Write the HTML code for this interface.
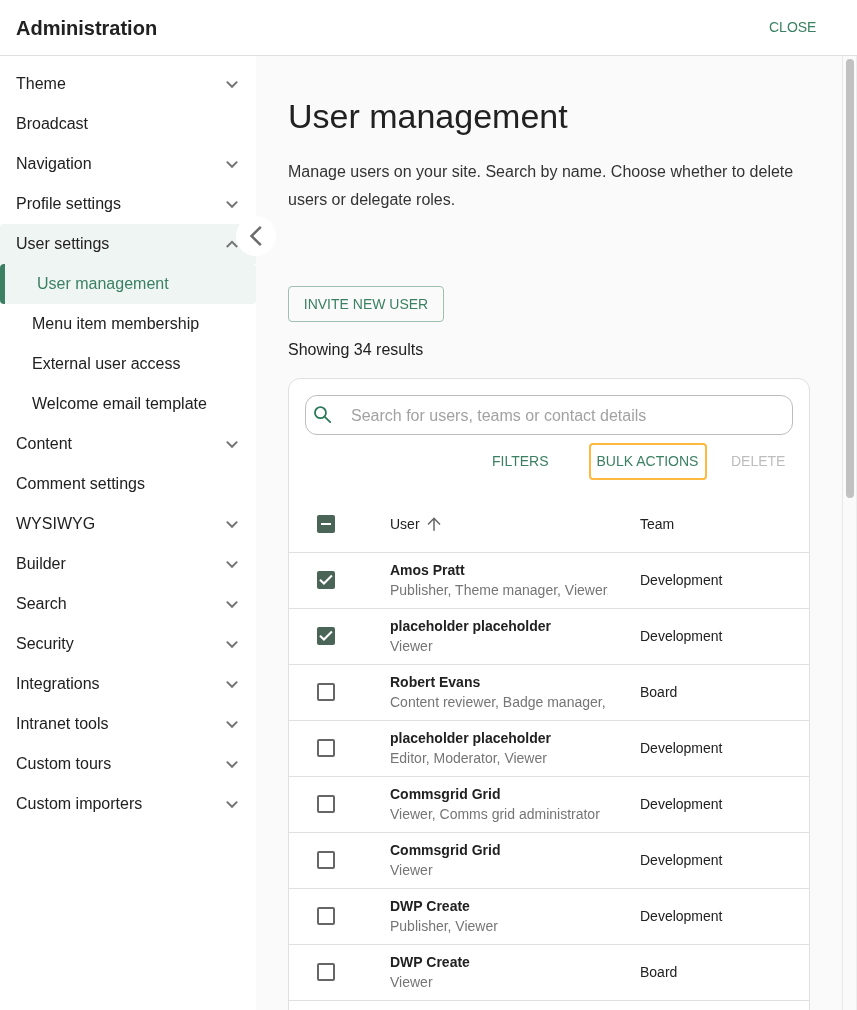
<!DOCTYPE html>
<html lang="en">
<head>
<meta charset="utf-8">
<title>Administration</title>
<style>
*{box-sizing:border-box;margin:0;padding:0}
html,body{width:857px;height:1010px;overflow:hidden;background:#fff}
body{-webkit-font-smoothing:antialiased;font-family:"Liberation Sans",Arial,Helvetica,sans-serif;color:#212121;position:relative}
.header,.sidebar,.main{will-change:transform}
.header{position:absolute;left:0;top:0;width:857px;height:56px;background:#fff;border-bottom:1px solid #e0e0e0;z-index:5}
.header h2{position:absolute;left:16px;top:16px;font-size:20px;line-height:24px;font-weight:700;color:#212121;letter-spacing:0}
.header .close{position:absolute;left:769px;top:18px;font-size:14px;line-height:18px;color:#3b8063;letter-spacing:0}
.sidebar{position:absolute;left:0;top:56px;width:256px;height:954px;background:#fff}
.nav{list-style:none;position:absolute;left:0;top:8px;width:256px}
.nav li{position:relative;height:40px;line-height:40px;font-size:16px;padding-left:16px;color:#212121;white-space:nowrap}
.nav li.sub{padding-left:32px}
.nav li.open{background:#eff5f3;border-radius:4px 0 0 0}
.nav li.active{background:#eff5f3;color:#3b8063;border-left:5px solid #3b8063;border-radius:4px;padding-left:32px}
.nav li svg{position:absolute;left:226px;top:15px;width:12px;height:10px}
.main{position:absolute;left:256px;top:56px;width:586px;height:954px;background:#fafafa;overflow:hidden}
.scroll{position:absolute;left:842px;top:56px;width:15px;height:954px;background:#fafafa;border-left:1px solid #e8e8e8;border-right:1px solid #ededed}
.scroll i{position:absolute;left:3px;top:3px;width:8px;height:439px;border-radius:4px;background:#c1c1c1}
.toggle{position:absolute;left:236px;top:216px;width:40px;height:40px;border-radius:50%;background:#fff;z-index:6}
.toggle svg{position:absolute;left:12px;top:10px;width:16px;height:20px}
h1{position:absolute;left:32px;top:40px;font-size:34px;line-height:40px;font-weight:400;color:#212121;white-space:nowrap}
.desc{position:absolute;left:32px;top:102px;width:520px;font-size:16px;line-height:28px;color:#333}
.invite{position:absolute;left:32px;top:230px;width:156px;height:36px;border:1px solid #9dc0b1;border-radius:4px;font-size:14px;line-height:34px;text-align:center;color:#3b8063;white-space:nowrap}
.showing{position:absolute;left:32px;top:284px;font-size:16px;line-height:20px;color:#212121}
.card{position:absolute;left:32px;top:322px;width:522px;height:700px;background:#fff;border:1px solid #e0e0e0;border-radius:12px;overflow:hidden}
.search{position:absolute;left:16px;top:16px;width:488px;height:40px;border:1px solid #bdbdbd;border-radius:12px;background:#fff}
.search svg{position:absolute;left:7px;top:8px;width:20px;height:20px}
.search span{position:absolute;left:45px;top:1px;line-height:38px;font-size:16px;color:#a2a2a2;white-space:nowrap}
.btn{position:absolute;font-size:14px;line-height:18px;white-space:nowrap}
.filters{left:203px;top:73px;color:#3b8063}
.bulk{left:300px;top:64px;width:118px;height:37px;border:2px solid #ffb93f;border-radius:4px;color:#3b8063;text-align:center;line-height:33px;padding-right:1px}
.delete{left:442px;top:73px;color:#bdbdbd}
.thead .cb{top:19px}
.thead{position:absolute;left:0;top:117px;width:520px;height:57px;border-bottom:1px solid #e0e0e0;font-size:14px;line-height:56px;color:#212121}
.row{position:absolute;left:0;width:520px;height:56px;border-bottom:1px solid #e0e0e0}
.cb{position:absolute;left:28px;top:18px;width:18px;height:18px;border-radius:2px}
.cb.on{background:#4a6558}
.cb.off{border:2px solid #666}
.cb svg{position:absolute;left:0;top:0;width:18px;height:18px}
.c1{position:absolute;left:101px}
.c2{position:absolute;left:351px}
.arr{position:absolute;left:137px;top:20px;width:16px;height:16px}
.name{position:absolute;left:101px;top:8px;font-size:14px;line-height:18px;font-weight:700;color:#212121;white-space:nowrap}
.roles{position:absolute;left:101px;top:28px;font-size:14px;line-height:18px;color:#757575;white-space:nowrap;width:218px;overflow:hidden}
.team{position:absolute;left:351px;top:18px;font-size:14px;line-height:18px;color:#212121;white-space:nowrap}
</style>
</head>
<body>
<div class="header"><h2>Administration</h2><span class="close">CLOSE</span></div>
<div class="sidebar">
<ul class="nav">
<li>Theme<svg viewBox="0 0 12 10"><path d="M0.8 2.6 6 7.8 11.2 2.6" fill="none" stroke="#757575" stroke-width="2"/></svg></li>
<li>Broadcast</li>
<li>Navigation<svg viewBox="0 0 12 10"><path d="M0.8 2.6 6 7.8 11.2 2.6" fill="none" stroke="#757575" stroke-width="2"/></svg></li>
<li>Profile settings<svg viewBox="0 0 12 10"><path d="M0.8 2.6 6 7.8 11.2 2.6" fill="none" stroke="#757575" stroke-width="2"/></svg></li>
<li class="open">User settings<svg viewBox="0 0 12 10"><path d="M0.8 8 6 2.8 11.2 8" fill="none" stroke="#757575" stroke-width="2"/></svg></li>
<li class="active">User management</li>
<li class="sub">Menu item membership</li>
<li class="sub">External user access</li>
<li class="sub">Welcome email template</li>
<li>Content<svg viewBox="0 0 12 10"><path d="M0.8 2.6 6 7.8 11.2 2.6" fill="none" stroke="#757575" stroke-width="2"/></svg></li>
<li>Comment settings</li>
<li>WYSIWYG<svg viewBox="0 0 12 10"><path d="M0.8 2.6 6 7.8 11.2 2.6" fill="none" stroke="#757575" stroke-width="2"/></svg></li>
<li>Builder<svg viewBox="0 0 12 10"><path d="M0.8 2.6 6 7.8 11.2 2.6" fill="none" stroke="#757575" stroke-width="2"/></svg></li>
<li>Search<svg viewBox="0 0 12 10"><path d="M0.8 2.6 6 7.8 11.2 2.6" fill="none" stroke="#757575" stroke-width="2"/></svg></li>
<li>Security<svg viewBox="0 0 12 10"><path d="M0.8 2.6 6 7.8 11.2 2.6" fill="none" stroke="#757575" stroke-width="2"/></svg></li>
<li>Integrations<svg viewBox="0 0 12 10"><path d="M0.8 2.6 6 7.8 11.2 2.6" fill="none" stroke="#757575" stroke-width="2"/></svg></li>
<li>Intranet tools<svg viewBox="0 0 12 10"><path d="M0.8 2.6 6 7.8 11.2 2.6" fill="none" stroke="#757575" stroke-width="2"/></svg></li>
<li>Custom tours<svg viewBox="0 0 12 10"><path d="M0.8 2.6 6 7.8 11.2 2.6" fill="none" stroke="#757575" stroke-width="2"/></svg></li>
<li>Custom importers<svg viewBox="0 0 12 10"><path d="M0.8 2.6 6 7.8 11.2 2.6" fill="none" stroke="#757575" stroke-width="2"/></svg></li>
</ul>
</div>
<div class="toggle"><svg viewBox="0 0 16 20"><path d="M12.8 0.9 3.5 10 12.8 19.1" fill="none" stroke="#6c6c6c" stroke-width="2.5"/></svg></div>
<div class="main">
<h1>User management</h1>
<p class="desc">Manage users on your site. Search by name. Choose whether to delete users or delegate roles.</p>
<div class="invite">INVITE NEW USER</div>
<div class="showing">Showing 34 results</div>
<div class="card">
<div class="search"><svg viewBox="0 0 20 20"><circle cx="7.45" cy="8.65" r="5.5" fill="none" stroke="#2b7a5a" stroke-width="1.8"/><path d="M11.5 12.7 17.2 18.1" stroke="#2b7a5a" stroke-width="1.8" stroke-linecap="round" fill="none"/></svg><span>Search for users, teams or contact details</span></div>
<span class="btn filters">FILTERS</span>
<span class="btn bulk">BULK ACTIONS</span>
<span class="btn delete">DELETE</span>
<div class="thead">
<span class="cb on"><svg viewBox="0 0 18 18"><path d="M4 9h10" stroke="#fff" stroke-width="2" fill="none"/></svg></span>
<span class="c1">User</span><svg class="arr" viewBox="0 0 16 16"><path d="M8 14.8V2.3M2 8.5 8 2.3 14 8.5" fill="none" stroke="#666" stroke-width="1.5"/></svg>
<span class="c2">Team</span>
</div>
<div class="row" style="top:174px"><span class="cb on"><svg viewBox="0 0 18 18"><path d="M3 8.8 6.9 12.6 14.9 4.6" stroke="#fff" stroke-width="2.1" fill="none"/></svg></span><span class="name">Amos Pratt</span><span class="roles">Publisher, Theme manager, Viewer,</span><span class="team">Development</span></div>
<div class="row" style="top:230px"><span class="cb on"><svg viewBox="0 0 18 18"><path d="M3 8.8 6.9 12.6 14.9 4.6" stroke="#fff" stroke-width="2.1" fill="none"/></svg></span><span class="name">placeholder placeholder</span><span class="roles">Viewer</span><span class="team">Development</span></div>
<div class="row" style="top:286px"><span class="cb off"></span><span class="name">Robert Evans</span><span class="roles">Content reviewer, Badge manager,</span><span class="team">Board</span></div>
<div class="row" style="top:342px"><span class="cb off"></span><span class="name">placeholder placeholder</span><span class="roles">Editor, Moderator, Viewer</span><span class="team">Development</span></div>
<div class="row" style="top:398px"><span class="cb off"></span><span class="name">Commsgrid Grid</span><span class="roles">Viewer, Comms grid administrator</span><span class="team">Development</span></div>
<div class="row" style="top:454px"><span class="cb off"></span><span class="name">Commsgrid Grid</span><span class="roles">Viewer</span><span class="team">Development</span></div>
<div class="row" style="top:510px"><span class="cb off"></span><span class="name">DWP Create</span><span class="roles">Publisher, Viewer</span><span class="team">Development</span></div>
<div class="row" style="top:566px"><span class="cb off"></span><span class="name">DWP Create</span><span class="roles">Viewer</span><span class="team">Board</span></div>
<div class="row" style="top:622px"></div>
</div>
</div>
<div class="scroll"><i></i></div>
</body>
</html>
